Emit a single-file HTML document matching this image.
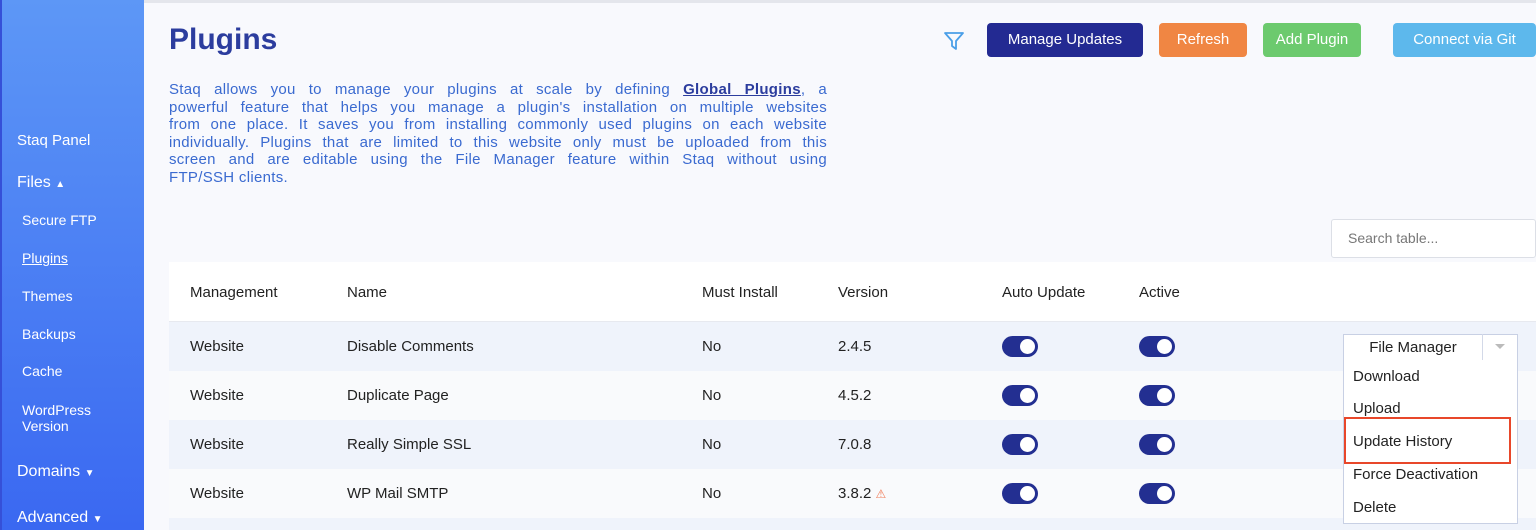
<!DOCTYPE html>
<html style="height:530px;overflow:hidden"><head><meta charset="utf-8"><style>
*{box-sizing:border-box;margin:0;padding:0}
body{width:1536px;height:530px;overflow:hidden;background:#f8f9fd;font-family:"Liberation Sans",sans-serif;position:relative;color:#222}
.sb{position:absolute;left:0;top:0;width:144px;height:530px;background:linear-gradient(#5d97f6,#3a68f1);border-left:2px solid #3550d8}
.sb div{position:absolute;color:#fff;font-size:15px}
.a{position:absolute}
h1{position:absolute;left:169px;top:23px;font-size:30px;color:#2c3d9e;font-weight:bold}
.desc{position:absolute;left:169px;top:81px;width:658px;font-size:15px;line-height:17.6px;color:#3a6ad0;letter-spacing:0.3px}
.desc div{text-align:justify;text-align-last:justify;white-space:nowrap;overflow:visible}
.desc div.l{text-align-last:left}
.desc b{color:#2c3d9e;text-decoration:underline}
.btn{position:absolute;top:23px;height:34px;border-radius:4px;color:#fff;font-size:15px;text-align:center;line-height:34px}
.row{position:absolute;left:169px;width:1367px;height:49px;font-size:15px}
.row span{position:absolute;top:16px}
.tg{position:absolute;top:14px;width:36px;height:21px;border-radius:11px;background:#232f91}
.tg:after{content:"";position:absolute;right:3px;top:3px;width:15px;height:15px;border-radius:50%;background:#fff}
.mi{position:absolute;left:1353px;font-size:15px;color:#222}
</style></head><body>
<div style="position:absolute;left:144px;top:0;width:1392px;height:3px;background:#e4e6ec"></div>
<div class="sb">
<div style="left:15px;top:132px">Staq Panel</div>
<div style="left:15px;top:174px;font-size:16px">Files <span style="font-size:10px">▲</span></div>
<div style="left:20px;top:212px;font-size:14px">Secure FTP</div>
<div style="left:20px;top:250px;font-size:14px;text-decoration:underline">Plugins</div>
<div style="left:20px;top:288px;font-size:14px">Themes</div>
<div style="left:20px;top:326px;font-size:14px">Backups</div>
<div style="left:20px;top:363px;font-size:14px">Cache</div>
<div style="left:20px;top:402px;font-size:14px;line-height:16px">WordPress<br>Version</div>
<div style="left:15px;top:463px;font-size:16px">Domains <span style="font-size:10px">▼</span></div>
<div style="left:15px;top:509px;font-size:16px">Advanced <span style="font-size:10px">▼</span></div>
</div>
<h1>Plugins</h1>
<div class="desc">
<div>Staq allows you to manage your plugins at scale by defining <b>Global Plugins</b>, a</div>
<div>powerful feature that helps you manage a plugin's installation on multiple websites</div>
<div>from one place. It saves you from installing commonly used plugins on each website</div>
<div>individually. Plugins that are limited to this website only must be uploaded from this</div>
<div>screen and are editable using the File Manager feature within Staq without using</div>
<div class="l">FTP/SSH clients.</div>
</div>
<svg class="a" style="left:943px;top:30px" width="22" height="22" viewBox="0 0 22 22"><path d="M2 3h18l-7 8v8l-4-3v-5z" fill="none" stroke="#4a9fe8" stroke-width="1.8" stroke-linejoin="round"/></svg>
<div class="btn" style="left:987px;width:156px;background:#232a92">Manage Updates</div>
<div class="btn" style="left:1159px;width:88px;background:#f08643">Refresh</div>
<div class="btn" style="left:1263px;width:98px;background:#6cca6e">Add Plugin</div>
<div class="btn" style="left:1393px;width:143px;background:#5db8ec">Connect via Git</div>
<div class="a" style="left:1331px;top:219px;width:205px;height:39px;background:#fff;border:1px solid #dcdfe6;border-radius:3px;font-size:14px;color:#777;padding:10px 16px">Search table...</div>
<div class="row" style="top:262px;height:60px;background:#fff;border-bottom:1px solid #e7e9ef"><span style="left:21px;top:22px">Management</span><span style="left:178px;top:22px">Name</span><span style="left:533px;top:22px">Must Install</span><span style="left:669px;top:22px">Version</span><span style="left:833px;top:22px">Auto Update</span><span style="left:970px;top:22px">Active</span></div>
<div class="row" style="top:322px;background:#eff3fb"><span style="left:21px">Website</span><span style="left:178px">Disable Comments</span><span style="left:533px">No</span><span style="left:669px">2.4.5</span><div class="tg" style="left:833px"></div><div class="tg" style="left:970px"></div></div>
<div class="row" style="top:371px;background:#f9fafc"><span style="left:21px">Website</span><span style="left:178px">Duplicate Page</span><span style="left:533px">No</span><span style="left:669px">4.5.2</span><div class="tg" style="left:833px"></div><div class="tg" style="left:970px"></div></div>
<div class="row" style="top:420px;background:#eff3fb"><span style="left:21px">Website</span><span style="left:178px">Really Simple SSL</span><span style="left:533px">No</span><span style="left:669px">7.0.8</span><div class="tg" style="left:833px"></div><div class="tg" style="left:970px"></div></div>
<div class="row" style="top:469px;background:#f9fafc"><span style="left:21px">Website</span><span style="left:178px">WP Mail SMTP</span><span style="left:533px">No</span><span style="left:669px">3.8.2 <span style="position:static;color:#f07a55;font-size:12px">⚠</span></span><div class="tg" style="left:833px"></div><div class="tg" style="left:970px"></div></div>
<div class="row" style="top:518px;height:12px;background:#eff3fb"></div>
<div class="a" style="left:1343px;top:334px;width:175px;height:27px;background:#fff;border:1px solid #c8d0e4"></div>
<div class="a" style="left:1343px;top:339px;width:140px;text-align:center;font-size:15px">File Manager</div>
<div class="a" style="left:1482px;top:334px;width:1px;height:27px;background:#d3d9e8"></div>
<div class="a" style="left:1495px;top:344px;width:0;height:0;border-left:5px solid transparent;border-right:5px solid transparent;border-top:5px solid #bbb"></div>
<div class="a" style="left:1343px;top:360px;width:175px;height:164px;background:#fff;border:1px solid #c8d0e4;border-top:none"></div>
<div class="mi" style="top:368px">Download</div>
<div class="mi" style="top:400px">Upload</div>
<div class="a" style="left:1344px;top:417px;width:167px;height:47px;border:2px solid #e8472a"></div>
<div class="mi" style="top:433px">Update History</div>
<div class="mi" style="top:466px">Force Deactivation</div>
<div class="mi" style="top:499px">Delete</div>
</body></html>
